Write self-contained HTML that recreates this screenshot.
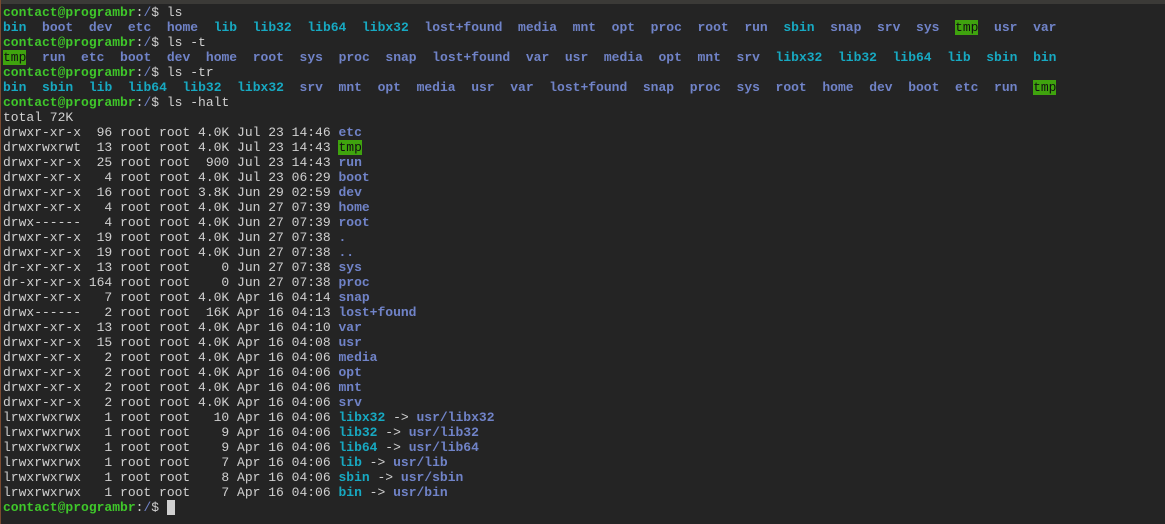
<!DOCTYPE html>
<html><head><meta charset="utf-8"><style>
html,body{margin:0;padding:0;background:#242424;width:1165px;height:524px;overflow:hidden}
.top{position:absolute;left:0;top:0;width:1165px;height:4px;background:#3b3a37}
.edge{position:absolute;left:0;top:0;width:1px;height:524px;background:#7a4a30}
pre{position:absolute;left:3px;top:5px;margin:0;font-family:"Liberation Mono",monospace;font-size:13px;line-height:15px;color:#d0d0d0}
.p{color:#3fc72a;font-weight:bold}
.b{color:#7083c8;font-weight:bold}
.c{color:#17a9c2;font-weight:bold}
.t{background:#3fa30e;color:#111}
.cur{background:#d0d0d0}
</style></head><body>
<div class="top"></div><div class="edge"></div>
<pre><span class="p">contact@programbr</span>:<span class="b" style="font-weight:normal">/</span>$ ls
<span class="c">bin</span>  <span class="b">boot</span>  <span class="b">dev</span>  <span class="b">etc</span>  <span class="b">home</span>  <span class="c">lib</span>  <span class="c">lib32</span>  <span class="c">lib64</span>  <span class="c">libx32</span>  <span class="b">lost+found</span>  <span class="b">media</span>  <span class="b">mnt</span>  <span class="b">opt</span>  <span class="b">proc</span>  <span class="b">root</span>  <span class="b">run</span>  <span class="c">sbin</span>  <span class="b">snap</span>  <span class="b">srv</span>  <span class="b">sys</span>  <span class="t">tmp</span>  <span class="b">usr</span>  <span class="b">var</span>
<span class="p">contact@programbr</span>:<span class="b" style="font-weight:normal">/</span>$ ls -t
<span class="t">tmp</span>  <span class="b">run</span>  <span class="b">etc</span>  <span class="b">boot</span>  <span class="b">dev</span>  <span class="b">home</span>  <span class="b">root</span>  <span class="b">sys</span>  <span class="b">proc</span>  <span class="b">snap</span>  <span class="b">lost+found</span>  <span class="b">var</span>  <span class="b">usr</span>  <span class="b">media</span>  <span class="b">opt</span>  <span class="b">mnt</span>  <span class="b">srv</span>  <span class="c">libx32</span>  <span class="c">lib32</span>  <span class="c">lib64</span>  <span class="c">lib</span>  <span class="c">sbin</span>  <span class="c">bin</span>
<span class="p">contact@programbr</span>:<span class="b" style="font-weight:normal">/</span>$ ls -tr
<span class="c">bin</span>  <span class="c">sbin</span>  <span class="c">lib</span>  <span class="c">lib64</span>  <span class="c">lib32</span>  <span class="c">libx32</span>  <span class="b">srv</span>  <span class="b">mnt</span>  <span class="b">opt</span>  <span class="b">media</span>  <span class="b">usr</span>  <span class="b">var</span>  <span class="b">lost+found</span>  <span class="b">snap</span>  <span class="b">proc</span>  <span class="b">sys</span>  <span class="b">root</span>  <span class="b">home</span>  <span class="b">dev</span>  <span class="b">boot</span>  <span class="b">etc</span>  <span class="b">run</span>  <span class="t">tmp</span>
<span class="p">contact@programbr</span>:<span class="b" style="font-weight:normal">/</span>$ ls -halt
total 72K
drwxr-xr-x  96 root root 4.0K Jul 23 14:46 <span class="b">etc</span>
drwxrwxrwt  13 root root 4.0K Jul 23 14:43 <span class="t">tmp</span>
drwxr-xr-x  25 root root  900 Jul 23 14:43 <span class="b">run</span>
drwxr-xr-x   4 root root 4.0K Jul 23 06:29 <span class="b">boot</span>
drwxr-xr-x  16 root root 3.8K Jun 29 02:59 <span class="b">dev</span>
drwxr-xr-x   4 root root 4.0K Jun 27 07:39 <span class="b">home</span>
drwx------   4 root root 4.0K Jun 27 07:39 <span class="b">root</span>
drwxr-xr-x  19 root root 4.0K Jun 27 07:38 <span class="b">.</span>
drwxr-xr-x  19 root root 4.0K Jun 27 07:38 <span class="b">..</span>
dr-xr-xr-x  13 root root    0 Jun 27 07:38 <span class="b">sys</span>
dr-xr-xr-x 164 root root    0 Jun 27 07:38 <span class="b">proc</span>
drwxr-xr-x   7 root root 4.0K Apr 16 04:14 <span class="b">snap</span>
drwx------   2 root root  16K Apr 16 04:13 <span class="b">lost+found</span>
drwxr-xr-x  13 root root 4.0K Apr 16 04:10 <span class="b">var</span>
drwxr-xr-x  15 root root 4.0K Apr 16 04:08 <span class="b">usr</span>
drwxr-xr-x   2 root root 4.0K Apr 16 04:06 <span class="b">media</span>
drwxr-xr-x   2 root root 4.0K Apr 16 04:06 <span class="b">opt</span>
drwxr-xr-x   2 root root 4.0K Apr 16 04:06 <span class="b">mnt</span>
drwxr-xr-x   2 root root 4.0K Apr 16 04:06 <span class="b">srv</span>
lrwxrwxrwx   1 root root   10 Apr 16 04:06 <span class="c">libx32</span> -&gt; <span class="b">usr/libx32</span>
lrwxrwxrwx   1 root root    9 Apr 16 04:06 <span class="c">lib32</span> -&gt; <span class="b">usr/lib32</span>
lrwxrwxrwx   1 root root    9 Apr 16 04:06 <span class="c">lib64</span> -&gt; <span class="b">usr/lib64</span>
lrwxrwxrwx   1 root root    7 Apr 16 04:06 <span class="c">lib</span> -&gt; <span class="b">usr/lib</span>
lrwxrwxrwx   1 root root    8 Apr 16 04:06 <span class="c">sbin</span> -&gt; <span class="b">usr/sbin</span>
lrwxrwxrwx   1 root root    7 Apr 16 04:06 <span class="c">bin</span> -&gt; <span class="b">usr/bin</span>
<span class="p">contact@programbr</span>:<span class="b" style="font-weight:normal">/</span>$ <span class="cur"> </span></pre>
</body></html>
